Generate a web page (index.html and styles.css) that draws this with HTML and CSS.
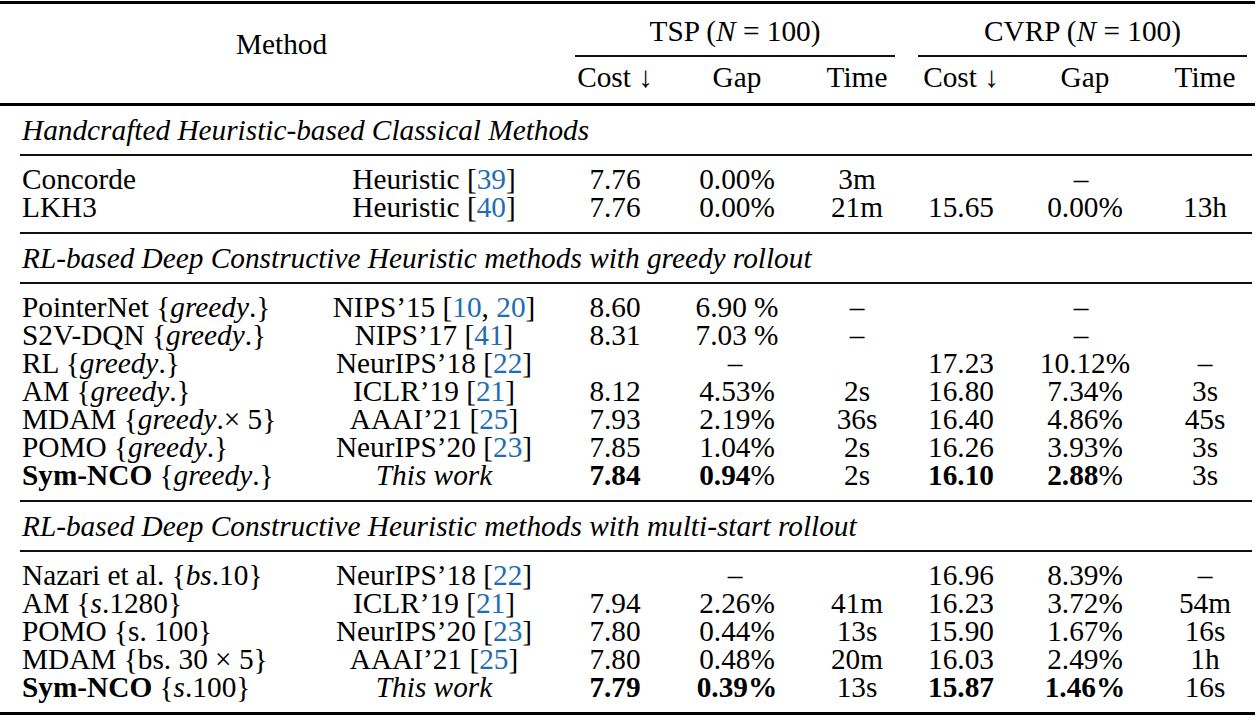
FILE: index.html
```html
<!DOCTYPE html>
<html lang="en">
<head>
<meta charset="utf-8">
<title>Results</title>
<link rel="stylesheet" href="styles.css">
</head>
<body>
<table class="results">
  <colgroup>
    <col class="c-name"><col class="c-venue">
    <col class="c-cost"><col class="c-gap"><col class="c-time">
    <col class="c-cost2"><col class="c-gap2"><col class="c-time2">
  </colgroup>
  <thead>
    <tr class="h1">
      <th colspan="2" rowspan="2" class="method">Method</th>
      <th colspan="3" class="group"><div class="cmid cmid-l">TSP (<i class="m">N</i> = 100)</div></th>
      <th colspan="3" class="group"><div class="cmid cmid-r">CVRP (<i class="m">N</i> = 100)</div></th>
    </tr>
    <tr class="h2">
      <th>Cost ↓</th><th>Gap</th><th>Time</th>
      <th>Cost ↓</th><th>Gap</th><th>Time</th>
    </tr>
  </thead>

  <tbody class="section">
    <tr><td colspan="8"><div class="sec-title">Handcrafted Heuristic-based Classical Methods</div></td></tr>
  </tbody>
  <tbody class="block">
    <tr><td class="name">Concorde</td><td>Heuristic [<span class="cite">39</span>]</td><td>7.76</td><td>0.00%</td><td>3m</td><td colspan="3">–</td></tr>
    <tr><td class="name">LKH3</td><td>Heuristic [<span class="cite">40</span>]</td><td>7.76</td><td>0.00%</td><td>21m</td><td>15.65</td><td>0.00%</td><td>13h</td></tr>
  </tbody>

  <tbody class="section">
    <tr><td colspan="8"><div class="sec-title ruled">RL-based Deep Constructive Heuristic methods with greedy rollout</div></td></tr>
  </tbody>
  <tbody class="block">
    <tr><td class="name">PointerNet {<i class="m">greedy</i>.}</td><td>NIPS’15 [<span class="cite">10</span>, <span class="cite">20</span>]</td><td>8.60</td><td>6.90 %</td><td>–</td><td colspan="3">–</td></tr>
    <tr><td class="name">S2V-DQN {<i class="m">greedy</i>.}</td><td>NIPS’17 [<span class="cite">41</span>]</td><td>8.31</td><td>7.03 %</td><td>–</td><td colspan="3">–</td></tr>
    <tr><td class="name">RL {<i class="m">greedy</i>.}</td><td>NeurIPS’18 [<span class="cite">22</span>]</td><td colspan="3">–</td><td>17.23</td><td>10.12%</td><td>–</td></tr>
    <tr><td class="name">AM {<i class="m">greedy</i>.}</td><td>ICLR’19 [<span class="cite">21</span>]</td><td>8.12</td><td>4.53%</td><td>2s</td><td>16.80</td><td>7.34%</td><td>3s</td></tr>
    <tr><td class="name">MDAM {<i class="m">greedy</i>.× 5}</td><td>AAAI’21 [<span class="cite">25</span>]</td><td>7.93</td><td>2.19%</td><td>36s</td><td>16.40</td><td>4.86%</td><td>45s</td></tr>
    <tr><td class="name">POMO {<i class="m">greedy</i>.}</td><td>NeurIPS’20 [<span class="cite">23</span>]</td><td>7.85</td><td>1.04%</td><td>2s</td><td>16.26</td><td>3.93%</td><td>3s</td></tr>
    <tr><td class="name"><b>Sym-NCO</b> {<i class="m">greedy</i>.}</td><td><i>This work</i></td><td><b>7.84</b></td><td><b>0.94</b>%</td><td>2s</td><td><b>16.10</b></td><td><b>2.88</b>%</td><td>3s</td></tr>
  </tbody>

  <tbody class="section">
    <tr><td colspan="8"><div class="sec-title ruled">RL-based Deep Constructive Heuristic methods with multi-start rollout</div></td></tr>
  </tbody>
  <tbody class="block last">
    <tr><td class="name">Nazari et al. {<i class="m">bs</i>.10}</td><td>NeurIPS’18 [<span class="cite">22</span>]</td><td colspan="3">–</td><td>16.96</td><td>8.39%</td><td>–</td></tr>
    <tr><td class="name">AM {<i class="m">s</i>.1280}</td><td>ICLR’19 [<span class="cite">21</span>]</td><td>7.94</td><td>2.26%</td><td>41m</td><td>16.23</td><td>3.72%</td><td>54m</td></tr>
    <tr><td class="name">POMO {s. 100}</td><td>NeurIPS’20 [<span class="cite">23</span>]</td><td>7.80</td><td>0.44%</td><td>13s</td><td>15.90</td><td>1.67%</td><td>16s</td></tr>
    <tr><td class="name">MDAM {bs. 30 × 5}</td><td>AAAI’21 [<span class="cite">25</span>]</td><td>7.80</td><td>0.48%</td><td>20m</td><td>16.03</td><td>2.49%</td><td>1h</td></tr>
    <tr><td class="name"><b>Sym-NCO</b> {<i class="m">s</i>.100}</td><td><i>This work</i></td><td><b>7.79</b></td><td><b>0.39%</b></td><td>13s</td><td><b>15.87</b></td><td><b>1.46%</b></td><td>16s</td></tr>
  </tbody>
</table>
</body>
</html>
```

FILE: styles.css
```css
html, body {
  margin: 0;
  padding: 0;
  background: #ffffff;
}

body {
  font-family: "Liberation Serif", "Times New Roman", serif;
  font-size: 29.3px;
  color: #000;
}

.results {
  width: 1255px;
  table-layout: fixed;
  border-collapse: separate;
  border-spacing: 0;
  margin-top: 1px;
  border-top: 3px solid #000;
  border-bottom: 3px solid #000;
  line-height: 28px;
}

.c-name  { width: 305px; }
.c-venue { width: 258px; }
.c-cost  { width: 104px; }
.c-gap   { width: 140px; }
.c-time  { width: 100px; }
.c-cost2 { width: 108px; }
.c-gap2  { width: 140px; }
.c-time2 { width: 100px; }

th, td {
  padding: 0;
  text-align: center;
  white-space: nowrap;
  font-weight: normal;
  vertical-align: top;
}

/* header */
.h1 th.group {
  padding-top: 13px;
}

.cmid {
  padding-bottom: 10px;
  border-bottom: 2px solid #111;
}

.cmid-l { margin: 0 12px 0 12px; }
.cmid-r { margin: 0 8px 0 11px; }

.method {
  padding-top: 26px;
  border-bottom: 3px solid #000;
}

.h2 th {
  padding-top: 6px;
  padding-bottom: 12px;
  border-bottom: 3px solid #000;
}

/* section titles */
.sec-title {
  margin: 0 3px 0 20px;
  padding: 10px 0 10px 2px;
  text-align: left;
  font-style: italic;
  border-bottom: 2px solid #111;
}

.sec-title.ruled {
  border-top: 2px solid #111;
}

/* data blocks */
.block tr:first-child td {
  padding-top: 9px;
}

.block tr:last-child td {
  padding-bottom: 11px;
}

td.name {
  text-align: left;
  padding-left: 22px;
}

.m {
  font-style: italic;
}

.cite {
  color: #1f6db3;
}

b {
  font-weight: bold;
}
```
